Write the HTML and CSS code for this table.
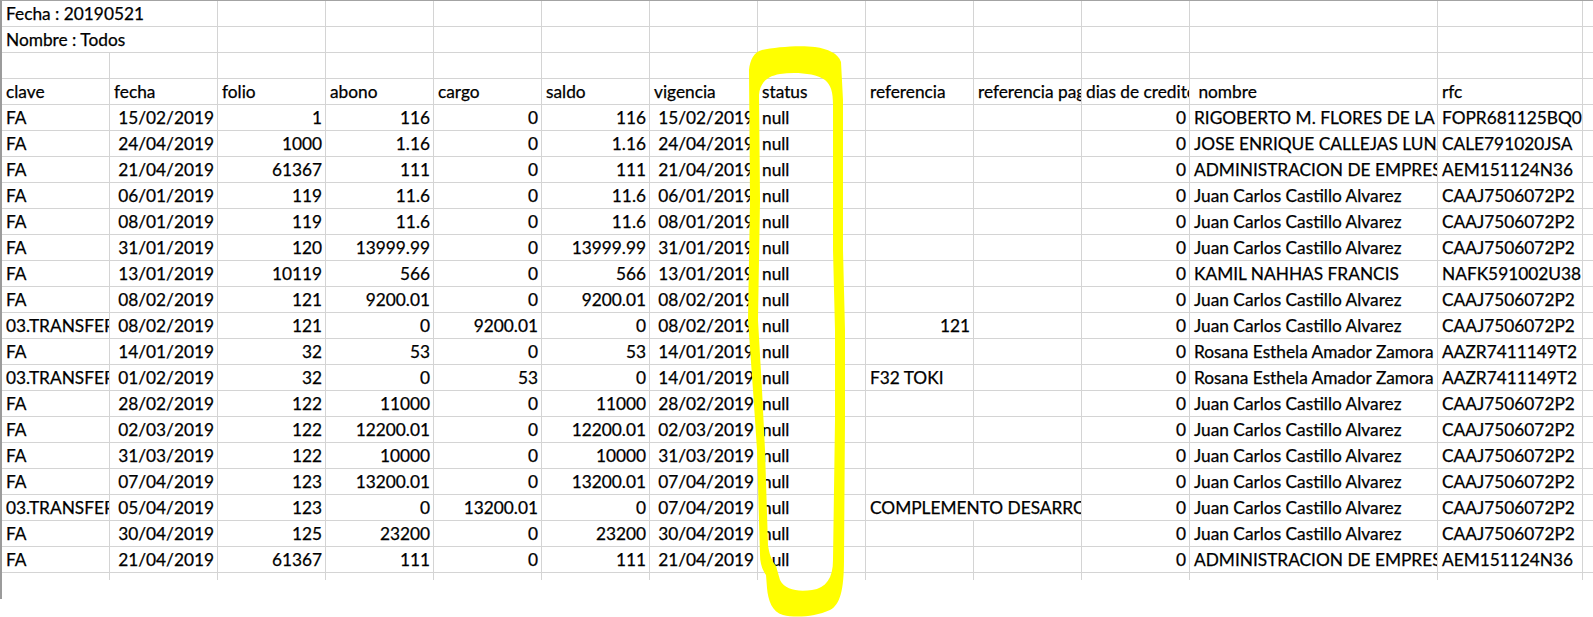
FILE: index.html
```html
<!DOCTYPE html>
<html lang="es">
<head>
<meta charset="utf-8">
<title>Reporte</title>
<link rel="stylesheet" href="styles.css">
</head>
<body>
<div class="page">
  <div class="sheet">
    <!-- row 1 -->
    <div class="c s2">Fecha : 20190521</div><div class="c"></div><div class="c"></div><div class="c"></div><div class="c"></div><div class="c"></div><div class="c"></div><div class="c"></div><div class="c"></div><div class="c"></div><div class="c"></div><div class="c"></div><div class="c"></div>
    <!-- row 2 -->
    <div class="c s2">Nombre : Todos</div><div class="c"></div><div class="c"></div><div class="c"></div><div class="c"></div><div class="c"></div><div class="c"></div><div class="c"></div><div class="c"></div><div class="c"></div><div class="c"></div><div class="c"></div><div class="c"></div>
    <!-- row 3 -->
    <div class="c"></div><div class="c"></div><div class="c"></div><div class="c"></div><div class="c"></div><div class="c"></div><div class="c"></div><div class="c"></div><div class="c"></div><div class="c"></div><div class="c"></div><div class="c"></div><div class="c"></div><div class="c"></div>
    <!-- header -->
    <div class="c">clave</div><div class="c">fecha</div><div class="c">folio</div><div class="c">abono</div><div class="c">cargo</div><div class="c">saldo</div><div class="c">vigencia</div><div class="c">status</div><div class="c">referencia</div><div class="c">referencia pago</div><div class="c">dias de credito</div><div class="c"> nombre</div><div class="c">rfc</div><div class="c"></div>

    <div class="c">FA</div><div class="c r">15/02/2019</div><div class="c r">1</div><div class="c r">116</div><div class="c r">0</div><div class="c r">116</div><div class="c r">15/02/2019</div><div class="c">null</div><div class="c"></div><div class="c"></div><div class="c r">0</div><div class="c">RIGOBERTO M. FLORES DE LA ROSA</div><div class="c">FOPR681125BQ0</div><div class="c"></div>

    <div class="c">FA</div><div class="c r">24/04/2019</div><div class="c r">1000</div><div class="c r">1.16</div><div class="c r">0</div><div class="c r">1.16</div><div class="c r">24/04/2019</div><div class="c">null</div><div class="c"></div><div class="c"></div><div class="c r">0</div><div class="c">JOSE ENRIQUE CALLEJAS LUNA</div><div class="c">CALE791020JSA</div><div class="c"></div>

    <div class="c">FA</div><div class="c r">21/04/2019</div><div class="c r">61367</div><div class="c r">111</div><div class="c r">0</div><div class="c r">111</div><div class="c r">21/04/2019</div><div class="c">null</div><div class="c"></div><div class="c"></div><div class="c r">0</div><div class="c">ADMINISTRACION DE EMPRESAS</div><div class="c">AEM151124N36</div><div class="c"></div>

    <div class="c">FA</div><div class="c r">06/01/2019</div><div class="c r">119</div><div class="c r">11.6</div><div class="c r">0</div><div class="c r">11.6</div><div class="c r">06/01/2019</div><div class="c">null</div><div class="c"></div><div class="c"></div><div class="c r">0</div><div class="c">Juan Carlos Castillo Alvarez</div><div class="c">CAAJ7506072P2</div><div class="c"></div>

    <div class="c">FA</div><div class="c r">08/01/2019</div><div class="c r">119</div><div class="c r">11.6</div><div class="c r">0</div><div class="c r">11.6</div><div class="c r">08/01/2019</div><div class="c">null</div><div class="c"></div><div class="c"></div><div class="c r">0</div><div class="c">Juan Carlos Castillo Alvarez</div><div class="c">CAAJ7506072P2</div><div class="c"></div>

    <div class="c">FA</div><div class="c r">31/01/2019</div><div class="c r">120</div><div class="c r">13999.99</div><div class="c r">0</div><div class="c r">13999.99</div><div class="c r">31/01/2019</div><div class="c">null</div><div class="c"></div><div class="c"></div><div class="c r">0</div><div class="c">Juan Carlos Castillo Alvarez</div><div class="c">CAAJ7506072P2</div><div class="c"></div>

    <div class="c">FA</div><div class="c r">13/01/2019</div><div class="c r">10119</div><div class="c r">566</div><div class="c r">0</div><div class="c r">566</div><div class="c r">13/01/2019</div><div class="c">null</div><div class="c"></div><div class="c"></div><div class="c r">0</div><div class="c">KAMIL NAHHAS FRANCIS</div><div class="c">NAFK591002U38</div><div class="c"></div>

    <div class="c">FA</div><div class="c r">08/02/2019</div><div class="c r">121</div><div class="c r">9200.01</div><div class="c r">0</div><div class="c r">9200.01</div><div class="c r">08/02/2019</div><div class="c">null</div><div class="c"></div><div class="c"></div><div class="c r">0</div><div class="c">Juan Carlos Castillo Alvarez</div><div class="c">CAAJ7506072P2</div><div class="c"></div>

    <div class="c">03.TRANSFERENCIA</div><div class="c r">08/02/2019</div><div class="c r">121</div><div class="c r">0</div><div class="c r">9200.01</div><div class="c r">0</div><div class="c r">08/02/2019</div><div class="c">null</div><div class="c r">121</div><div class="c"></div><div class="c r">0</div><div class="c">Juan Carlos Castillo Alvarez</div><div class="c">CAAJ7506072P2</div><div class="c"></div>

    <div class="c">FA</div><div class="c r">14/01/2019</div><div class="c r">32</div><div class="c r">53</div><div class="c r">0</div><div class="c r">53</div><div class="c r">14/01/2019</div><div class="c">null</div><div class="c"></div><div class="c"></div><div class="c r">0</div><div class="c">Rosana Esthela Amador Zamora</div><div class="c">AAZR7411149T2</div><div class="c"></div>

    <div class="c">03.TRANSFERENCIA</div><div class="c r">01/02/2019</div><div class="c r">32</div><div class="c r">0</div><div class="c r">53</div><div class="c r">0</div><div class="c r">14/01/2019</div><div class="c">null</div><div class="c">F32 TOKI</div><div class="c"></div><div class="c r">0</div><div class="c">Rosana Esthela Amador Zamora</div><div class="c">AAZR7411149T2</div><div class="c"></div>

    <div class="c">FA</div><div class="c r">28/02/2019</div><div class="c r">122</div><div class="c r">11000</div><div class="c r">0</div><div class="c r">11000</div><div class="c r">28/02/2019</div><div class="c">null</div><div class="c"></div><div class="c"></div><div class="c r">0</div><div class="c">Juan Carlos Castillo Alvarez</div><div class="c">CAAJ7506072P2</div><div class="c"></div>

    <div class="c">FA</div><div class="c r">02/03/2019</div><div class="c r">122</div><div class="c r">12200.01</div><div class="c r">0</div><div class="c r">12200.01</div><div class="c r">02/03/2019</div><div class="c">null</div><div class="c"></div><div class="c"></div><div class="c r">0</div><div class="c">Juan Carlos Castillo Alvarez</div><div class="c">CAAJ7506072P2</div><div class="c"></div>

    <div class="c">FA</div><div class="c r">31/03/2019</div><div class="c r">122</div><div class="c r">10000</div><div class="c r">0</div><div class="c r">10000</div><div class="c r">31/03/2019</div><div class="c">null</div><div class="c"></div><div class="c"></div><div class="c r">0</div><div class="c">Juan Carlos Castillo Alvarez</div><div class="c">CAAJ7506072P2</div><div class="c"></div>

    <div class="c">FA</div><div class="c r">07/04/2019</div><div class="c r">123</div><div class="c r">13200.01</div><div class="c r">0</div><div class="c r">13200.01</div><div class="c r">07/04/2019</div><div class="c">null</div><div class="c"></div><div class="c"></div><div class="c r">0</div><div class="c">Juan Carlos Castillo Alvarez</div><div class="c">CAAJ7506072P2</div><div class="c"></div>

    <div class="c">03.TRANSFERENCIA</div><div class="c r">05/04/2019</div><div class="c r">123</div><div class="c r">0</div><div class="c r">13200.01</div><div class="c r">0</div><div class="c r">07/04/2019</div><div class="c">null</div><div class="c s2">COMPLEMENTO DESARROLLO</div><div class="c r">0</div><div class="c">Juan Carlos Castillo Alvarez</div><div class="c">CAAJ7506072P2</div><div class="c"></div>

    <div class="c">FA</div><div class="c r">30/04/2019</div><div class="c r">125</div><div class="c r">23200</div><div class="c r">0</div><div class="c r">23200</div><div class="c r">30/04/2019</div><div class="c">null</div><div class="c"></div><div class="c"></div><div class="c r">0</div><div class="c">Juan Carlos Castillo Alvarez</div><div class="c">CAAJ7506072P2</div><div class="c"></div>

    <div class="c">FA</div><div class="c r">21/04/2019</div><div class="c r">61367</div><div class="c r">111</div><div class="c r">0</div><div class="c r">111</div><div class="c r">21/04/2019</div><div class="c">null</div><div class="c"></div><div class="c"></div><div class="c r">0</div><div class="c">ADMINISTRACION DE EMPRESAS</div><div class="c">AEM151124N36</div><div class="c"></div>

    <!-- partial row -->
    <div class="c p"></div><div class="c p"></div><div class="c p"></div><div class="c p"></div><div class="c p"></div><div class="c p"></div><div class="c p"></div><div class="c p"></div><div class="c p"></div><div class="c p"></div><div class="c p"></div><div class="c p"></div><div class="c p"></div><div class="c p"></div>
  </div>

  <svg class="marker" width="1593" height="617" viewBox="0 0 1593 617" aria-hidden="true">
    <path fill="#ffff00" fill-rule="evenodd" d="
      M 749 70
      C 750 60, 754 52, 762 50
      C 775 47, 800 45, 815 47
      C 828 49, 838 53, 841 62
      L 843 100 L 843 250 L 845 330 L 845 420 L 844 560
      C 844 590, 840 605, 830 610
      C 815 617, 795 618, 783 615
      C 772 612, 768 600, 767 588
      L 766 575
      C 762 570, 760 562, 760 555
      L 757 450 L 753 390 L 748 320 L 750 200 Z
      M 759 95
      C 760 82, 768 76, 780 74
      C 795 72, 815 73, 825 80
      C 831 85, 833 92, 833 105
      L 833 250 L 835 330 L 835 420 L 833 560
      C 833 578, 826 588, 812 590
      C 798 592, 785 590, 780 580
      L 776 566
      C 771 560, 769 552, 768 545
      L 765 450 L 762 390 L 758 320 L 760 200 Z"/>
  </svg>
</div>
</body>
</html>
```

FILE: styles.css
```css
html, body {
  margin: 0;
  padding: 0;
  background: #ffffff;
}

.page {
  position: relative;
  width: 1593px;
  height: 617px;
  overflow: hidden;
}

.sheet {
  display: grid;
  grid-template-columns: repeat(11, 108px) 248px 145px 60px;
  grid-auto-rows: 26px;
  border-left: 2px solid #9b9b9b;
  border-top: 1px solid #a3a3a3;
  width: max-content;
  font-family: Lato, "Open Sans", sans-serif;
  font-size: 17.3px;
  color: #000;
  -webkit-text-stroke: 0.25px #000;
}

.c {
  box-sizing: border-box;
  border-right: 1px solid #d4d4d4;
  border-bottom: 1px solid #d4d4d4;
  padding: 0 3px 0 4px;
  line-height: 25px;
  white-space: pre;
  overflow: hidden;
  text-align: left;
}

.r {
  text-align: right;
}

.s2 {
  grid-column: span 2;
}

.p {
  height: 7px;
  border-bottom: none;
}

.marker {
  position: absolute;
  left: 0;
  top: 0;
  pointer-events: none;
}
```
